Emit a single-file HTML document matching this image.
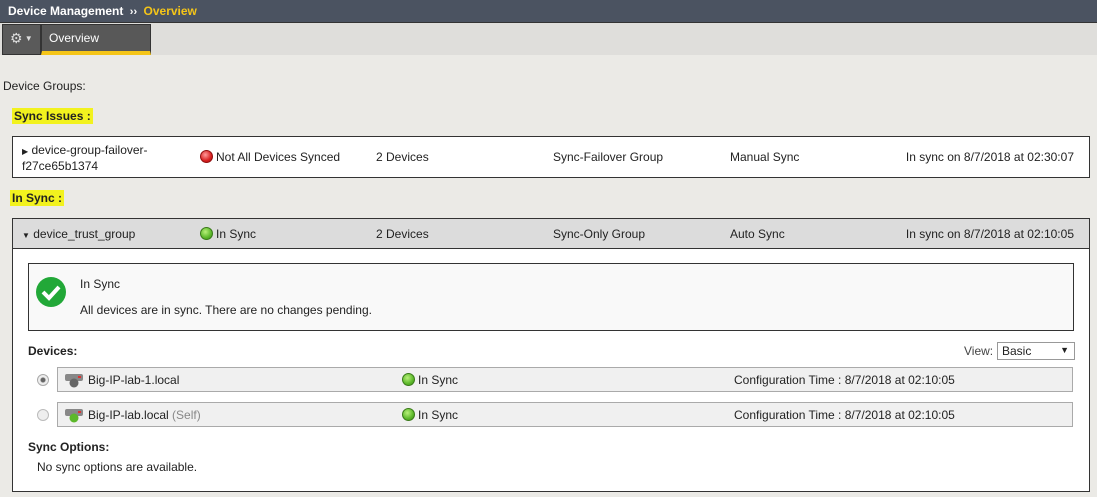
<!DOCTYPE html><html><head><style>
*{margin:0;padding:0;box-sizing:border-box}
body{width:1097px;height:497px;background:#ebeae6;font-family:"Liberation Sans",Arial,sans-serif;font-size:12px;color:#222;position:relative;overflow:hidden}
.a{position:absolute;white-space:nowrap}
.dot{display:inline-block;width:13px;height:13px;border-radius:50%;vertical-align:-2px;margin-right:3px}
.g{background:radial-gradient(circle at 40% 35%,#b8f07a,#5cb82a 60%,#3d8a1a);border:1px solid #3a7a1a}
.r{background:radial-gradient(circle at 40% 35%,#ff9a9a,#d82020 60%,#a01010);border:1px solid #901010}
</style></head><body>
<div class="a" style="left:0;top:0;width:1097px;height:23px;background:#4b5361;border-bottom:1px solid #333"></div>
<div class="a" style="left:8px;top:4px;color:#fff;font-weight:bold;font-size:12px">Device Management <span style="font-size:11px">&nbsp;››&nbsp;</span> <span style="color:#f5c518">Overview</span></div>
<div class="a" style="left:0;top:23px;width:1097px;height:32px;background:#dfdedb"></div>
<div class="a" style="left:2px;top:24px;width:39px;height:31px;background:#5a5a5a;border:1px solid #333;color:#ddd;font-size:14px;padding:5px 0 0 7px">⚙<span style="font-size:8px;vertical-align:2px"> ▼</span></div>
<div class="a" style="left:41px;top:24px;width:110px;height:31px;background:#585858;border:1px solid #333;border-bottom:4px solid #f5c518;color:#fff;padding:6px 0 0 7px">Overview</div>
<div class="a" style="left:3px;top:79px">Device Groups:</div>
<div class="a" style="left:12px;top:108px;background:#f2f21e;font-weight:bold;padding:1px 2px">Sync Issues :</div>
<div class="a" style="left:12px;top:136px;width:1078px;height:42px;background:#fff;border:1px solid #333"></div>
<div class="a" style="left:22px;top:143px;line-height:14px"><span style="font-size:8px">▶</span> device-group-failover-<br>f27ce65b1374</div>
<div class="a" style="left:200px;top:150px"><span class="dot r"></span>Not All Devices Synced</div>
<div class="a" style="left:376px;top:150px">2 Devices</div>
<div class="a" style="left:553px;top:150px">Sync-Failover Group</div>
<div class="a" style="left:730px;top:150px">Manual Sync</div>
<div class="a" style="right:23px;top:150px">In sync on 8/7/2018 at 02:30:07</div>
<div class="a" style="left:10px;top:190px;background:#f2f21e;font-weight:bold;padding:1px 2px">In Sync :</div>
<div class="a" style="left:12px;top:218px;width:1078px;height:274px;background:#fff;border:1px solid #333"></div>
<div class="a" style="left:13px;top:219px;width:1076px;height:30px;background:#dcdcdc;border-bottom:1px solid #333"></div>
<div class="a" style="left:22px;top:227px"><span style="font-size:8px">▼</span> device_trust_group</div>
<div class="a" style="left:200px;top:227px"><span class="dot g"></span>In Sync</div>
<div class="a" style="left:376px;top:227px">2 Devices</div>
<div class="a" style="left:553px;top:227px">Sync-Only Group</div>
<div class="a" style="left:730px;top:227px">Auto Sync</div>
<div class="a" style="right:23px;top:227px">In sync on 8/7/2018 at 02:10:05</div>
<div class="a" style="left:28px;top:263px;width:1046px;height:68px;background:#f9f9f9;border:1px solid #333"></div>
<svg class="a" style="left:35px;top:276px" width="32" height="32"><circle cx="16" cy="16" r="15" fill="#22a838"/><path d="M8 16l6 6 10-11" stroke="#fff" stroke-width="4" fill="none"/></svg>
<div class="a" style="left:80px;top:277px">In Sync</div>
<div class="a" style="left:80px;top:303px">All devices are in sync. There are no changes pending.</div>
<div class="a" style="left:28px;top:344px;font-weight:bold">Devices:</div>
<div class="a" style="left:964px;top:344px;color:#444">View:</div>
<div class="a" style="left:997px;top:342px;width:78px;height:18px;background:#fff;border:1px solid #999;padding:1px 0 0 4px">Basic<span style="position:absolute;right:5px;top:2px;font-size:9px">▼</span></div>
<div class="a" style="left:57px;top:367px;width:1016px;height:25px;background:#f0f0f0;border:1px solid #aaa"></div>
<div class="a" style="left:57px;top:402px;width:1016px;height:25px;background:#f0f0f0;border:1px solid #aaa"></div>
<div class="a" style="left:37px;top:374px;width:12px;height:12px;border-radius:50%;border:1px solid #aaa;background:radial-gradient(circle,#666 2px,#eee 3px)"></div>
<div class="a" style="left:37px;top:409px;width:12px;height:12px;border-radius:50%;border:1px solid #bbb;background:#eee"></div>
<svg class="a" style="left:64px;top:372px" width="20" height="16"><rect x="1" y="2" width="18" height="7" rx="2" fill="#888"/><circle cx="10" cy="11" r="4.5" fill="#666"/><rect x="14" y="4" width="3" height="2" fill="#d33"/></svg>
<svg class="a" style="left:64px;top:407px" width="20" height="16"><rect x="1" y="2" width="18" height="7" rx="2" fill="#888"/><circle cx="10" cy="11" r="4.5" fill="#5cb82a"/><rect x="14" y="4" width="3" height="2" fill="#d33"/></svg>
<div class="a" style="left:88px;top:373px">Big-IP-lab-1.local</div>
<div class="a" style="left:88px;top:408px">Big-IP-lab.local <span style="color:#888">(Self)</span></div>
<div class="a" style="left:402px;top:373px"><span class="dot g"></span>In Sync</div>
<div class="a" style="left:402px;top:408px"><span class="dot g"></span>In Sync</div>
<div class="a" style="left:734px;top:373px">Configuration Time : 8/7/2018 at 02:10:05</div>
<div class="a" style="left:734px;top:408px">Configuration Time : 8/7/2018 at 02:10:05</div>
<div class="a" style="left:28px;top:440px;font-weight:bold">Sync Options:</div>
<div class="a" style="left:37px;top:460px">No sync options are available.</div>
</body></html>
